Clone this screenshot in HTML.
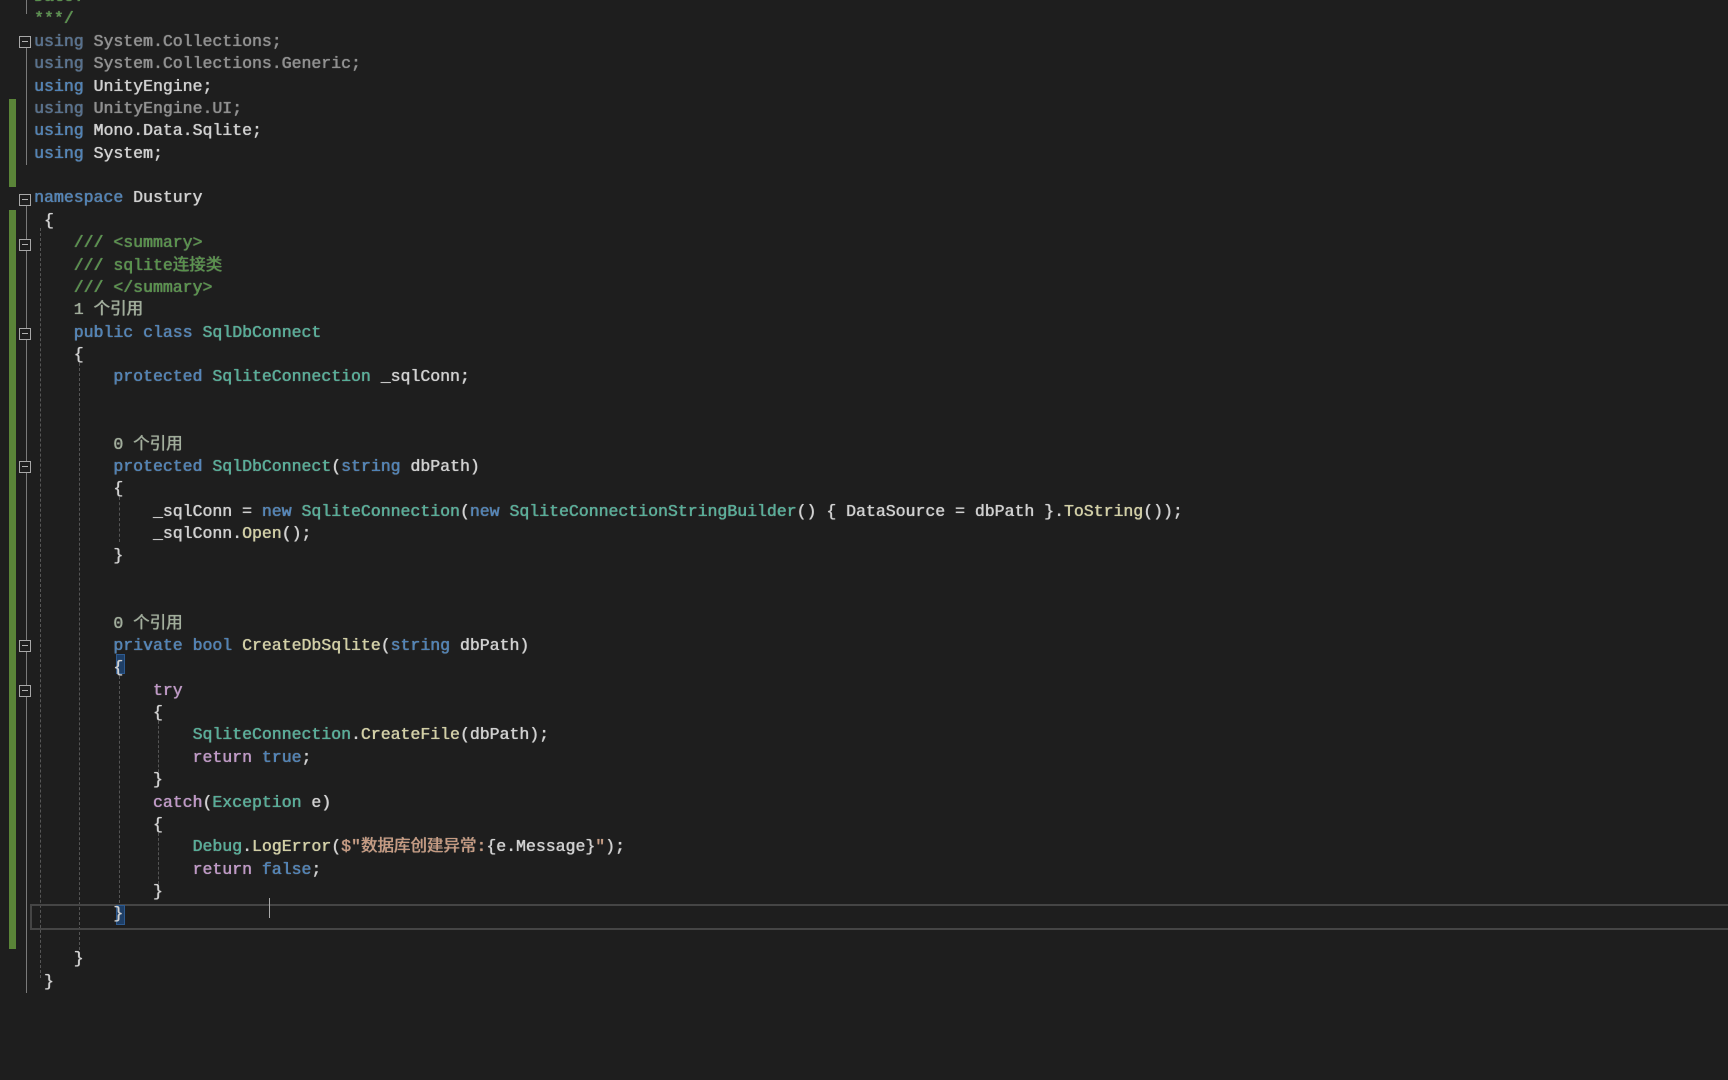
<!DOCTYPE html>
<html><head><meta charset="utf-8"><style>
html,body{margin:0;padding:0;background:#1e1e1e;width:1728px;height:1080px;overflow:hidden}
.code{position:absolute;left:34px;top:-14px;font-family:"Liberation Mono","Noto Sans CJK SC",monospace;font-size:16.5px;line-height:22.37px;color:#d0d0d0;white-space:pre;font-weight:normal;text-shadow:0 0 1px rgba(220,220,220,0.5),0.4px 0 0 currentColor}
.k{color:#4f82b6}.d{color:#55708e}.dt{color:#8f8f8f}.t{color:#56ae98}.c{color:#57924a}.p{color:#bf97c6}.m{color:#d2cfa4}.s{color:#c69a80}.n{color:#a0ad9a}
.g{position:absolute;background:#5a8438;width:7px;left:9px}
.guide{position:absolute;width:0;border-left:1.5px dashed #555}
.fold{position:absolute;left:19px;width:12px;height:12px;border:1.5px solid #a8a8a8;box-sizing:border-box;background:#1e1e1e}
.fold:after{content:"";position:absolute;left:2px;right:2px;top:3.75px;height:1.5px;background:#b0b0b0}
.vl{position:absolute;left:26px;width:0;border-left:1.5px solid #7a7a7a}
</style></head><body>
<div class="g" style="top:99px;height:88px"></div>
<div class="g" style="top:210px;height:739px"></div>
<div class="vl" style="top:0;height:14px"></div>
<div class="vl" style="top:46px;height:119px"></div>
<div class="vl" style="top:203px;height:790px"></div>
<div class="fold" style="top:36px"></div>
<div class="fold" style="top:194px"></div>
<div class="fold" style="top:239px"></div>
<div class="fold" style="top:328px"></div>
<div class="fold" style="top:461px"></div>
<div class="fold" style="top:640px"></div>
<div class="fold" style="top:685px"></div>
<div class="guide" style="left:40px;top:228px;height:750px"></div>
<div class="guide" style="left:79px;top:363px;height:592px"></div>
<div class="guide" style="left:119px;top:497px;height:45px"></div>
<div class="guide" style="left:119px;top:676px;height:232px"></div>
<div class="guide" style="left:158px;top:721px;height:56px"></div>
<div class="guide" style="left:158px;top:833px;height:56px"></div>
<div style="position:absolute;left:30px;right:-4px;top:904px;height:22px;border:2px solid #454545;border-right:none"></div>
<div style="position:absolute;left:116px;top:905px;width:9px;height:20px;background:#1f3f66;border:1px solid #2d5a90;box-sizing:border-box"></div>
<div style="position:absolute;left:116px;top:654px;width:9px;height:20px;background:#1f3f66;border:1px solid #2d5a90;box-sizing:border-box"></div>
<div style="position:absolute;left:269px;top:898px;width:1px;height:20px;background:#aaa"></div>
<div class="code"><span class="c">Date:</span>
<span class="c">***/</span>
<span class="d">using</span> <span class="dt">System.Collections;</span>
<span class="d">using</span> <span class="dt">System.Collections.Generic;</span>
<span class="k">using</span> UnityEngine;
<span class="d">using</span> <span class="dt">UnityEngine.UI;</span>
<span class="k">using</span> Mono.Data.Sqlite;
<span class="k">using</span> System;

<span class="k">namespace</span> Dustury
 {
    <span class="c">/// &lt;summary&gt;</span>
    <span class="c">/// sqlite连接类</span>
    <span class="c">/// &lt;/summary&gt;</span>
    <span class="n">1 个引用</span>
    <span class="k">public</span> <span class="k">class</span> <span class="t">SqlDbConnect</span>
    {
        <span class="k">protected</span> <span class="t">SqliteConnection</span> _sqlConn;


        <span class="n">0 个引用</span>
        <span class="k">protected</span> <span class="t">SqlDbConnect</span>(<span class="k">string</span> dbPath)
        {
            _sqlConn = <span class="k">new</span> <span class="t">SqliteConnection</span>(<span class="k">new</span> <span class="t">SqliteConnectionStringBuilder</span>() { DataSource = dbPath }.<span class="m">ToString</span>());
            _sqlConn.<span class="m">Open</span>();
        }


        <span class="n">0 个引用</span>
        <span class="k">private</span> <span class="k">bool</span> <span class="m">CreateDbSqlite</span>(<span class="k">string</span> dbPath)
        {
            <span class="p">try</span>
            {
                <span class="t">SqliteConnection</span>.<span class="m">CreateFile</span>(dbPath);
                <span class="p">return</span> <span class="k">true</span>;
            }
            <span class="p">catch</span>(<span class="t">Exception</span> e)
            {
                <span class="t">Debug</span>.<span class="m">LogError</span>(<span class="s">$"数据库创建异常:</span>{e.Message}<span class="s">"</span>);
                <span class="p">return</span> <span class="k">false</span>;
            }
        }

    }
 }</div>
</body></html>
